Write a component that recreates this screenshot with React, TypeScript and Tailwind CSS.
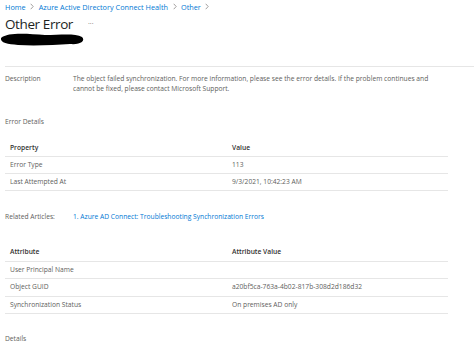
import React from "react";

const font = { fontFamily: '"Open Sans", "Noto Sans", sans-serif' };

function Row({ a, b, header, h }: { a: string; b: string; header?: boolean; h: string }) {
  return (
    <div className={`flex ${h} items-center border-b border-[#e6e6e6] ${header ? "text-[#323130] font-semibold" : "text-[#605e5c]"}`}>
      <div className="w-[227px] pl-[5px]">{a}</div>
      <div>{b}</div>
    </div>
  );
}

function Chevron() {
  return (
    <svg width="4" height="7" viewBox="0 0 4 7" className="shrink-0">
      <path d="M0.7 0.8 L3.2 3.5 L0.7 6.2" fill="none" stroke="#8a8886" strokeWidth="0.8" />
    </svg>
  );
}

export default function App() {
  return (
    <div className="w-[474px] h-[345px] overflow-hidden bg-white text-[6.7px] leading-[10px] text-[#323130] pl-[5px] relative" style={font}>
      <div className="flex items-center gap-[4.5px] pt-[1px] h-[12px] text-[7.3px] text-[#0078d4]">
        <span>Home</span>
        <Chevron />
        <span>Azure Active Directory Connect Health</span>
        <Chevron />
        <span>Other</span>
        <Chevron />
      </div>
      <div className="flex items-end h-[21px]">
        <span className="text-[13.5px] leading-[18px] tracking-[-0.4px] text-[#201f1e]">Other Error</span>
        <span className="ml-[15px] mb-[4px] text-[#605e5c] text-[7px]">···</span>
      </div>
      <div className="relative h-[33px]">
        <svg className="absolute left-[-5px] top-[-3px]" width="90" height="20" viewBox="0 0 90 20">
          <path d="M1 8 C 8 2, 28 4, 45 5 C 60 5, 75 3, 82 7 C 86 11, 80 15, 70 14 C 55 15, 35 16, 18 15 C 8 14, 0 13, 1 8 Z" fill="#000" />
        </svg>
      </div>
      <div className="border-t border-[#e6e6e6]" />
      <div className="flex mt-[7px] text-[#605e5c]">
        <div className="w-[68px] shrink-0">Description</div>
        <div className="w-[365px]">
          The object failed synchronization. For more information, please see the error details. If the problem continues and cannot be fixed, please contact Microsoft Support.
        </div>
      </div>
      <div className="mt-[23px] text-[#605e5c]">Error Details</div>
      <div className="mt-[13px] w-[443px]">
        <Row h="h-[17px]" a="Property" b="Value" header />
        <Row h="h-[17px]" a="Error Type" b="113" />
        <Row h="h-[17px]" a="Last Attempted At" b="9/3/2021, 10:42:23 AM" />
      </div>
      <div className="flex mt-[21px]">
        <div className="w-[68px] shrink-0 text-[#605e5c]">Related Articles:</div>
        <div className="text-[#0078d4]">1. Azure AD Connect: Troubleshooting Synchronization Errors</div>
      </div>
      <div className="mt-[22px] w-[443px]">
        <Row h="h-[17.5px]" a="Attribute" b="Attribute Value" header />
        <Row h="h-[17.5px]" a="User Principal Name" b="" />
        <Row h="h-[17.5px]" a="Object GUID" b="a20bf5ca-763a-4b02-817b-308d2d186d32" />
        <Row h="h-[17.5px]" a="Synchronization Status" b="On premises AD only" />
      </div>
      <div className="mt-[20px] text-[#605e5c]">Details</div>
    </div>
  );
}
